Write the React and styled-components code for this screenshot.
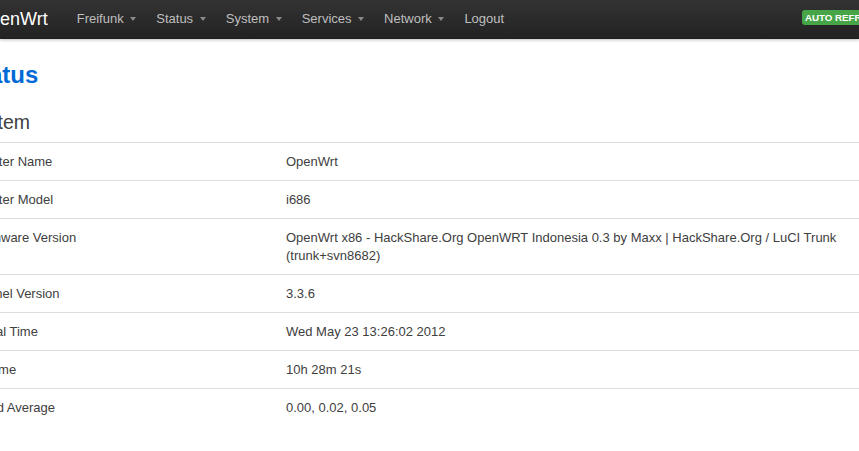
import React from "react";
import styled, { createGlobalStyle } from "styled-components";

const Global = createGlobalStyle`
  html, body { margin: 0; padding: 0; overflow: hidden; background: #fff; }
  body {
    font-family: "Liberation Sans", Arial, Helvetica, sans-serif;
    font-size: 13px;
    line-height: 18px;
    color: #404040;
  }
`;

const Topbar = styled.header`
  height: 39px;
  background: linear-gradient(to bottom, #333333, #222222);
  box-shadow: 0 1px 3px rgba(0, 0, 0, 0.25), inset 0 -1px 0 rgba(0, 0, 0, 0.1);
  position: relative;
  z-index: 2;
`;

const Container = styled.div`
  width: 940px;
  margin-left: -35px;
`;

const TopInner = styled(Container)`
  display: flex;
  align-items: center;
  height: 39px;
`;

const Brand = styled.a`
  font-size: 18px;
  line-height: 1;
  color: #ffffff;
  margin-left: 11px;
  padding: 0 19px 2px 0;
  text-decoration: none;
`;

const Nav = styled.ul`
  display: flex;
  list-style: none;
  margin: 0;
  padding: 0;
`;

const NavLink = styled.a`
  display: flex;
  align-items: center;
  padding: 0 10px 2px 10px;
  color: #bfbfbf;
  font-size: 13px;
  line-height: 19px;
  text-decoration: none;
`;

const Caret = styled.span`
  display: inline-block;
  width: 0;
  height: 0;
  margin-left: 6.6px;
  margin-top: 1px;
  border-top: 4px solid #ffffff;
  border-left: 3.5px solid transparent;
  border-right: 3.5px solid transparent;
  opacity: 0.45;
`;

const Spacer = styled.div`
  flex: 1;
`;

const Label = styled.span`
  display: inline-block;
  padding: 2px 3px 2px;
  margin-right: 3px;
  margin-top: -5px;
  font-size: 9.75px;
  line-height: 11px;
  font-weight: bold;
  color: #ffffff;
  text-transform: uppercase;
  white-space: nowrap;
  background: #46a546;
  border-radius: 3px;
`;

const Main = styled(Container)`
  padding-top: 18px;
`;

const Title = styled.h2`
  margin: 0;
  font-size: 24px;
  line-height: 36px;
  font-weight: bold;
  color: #0069d6;
`;

const Legend = styled.h3`
  margin: 20px 0 9px;
  font-size: 19.5px;
  line-height: 19.5px;
  font-weight: normal;
  color: #404040;
`;

const Table = styled.table`
  width: 100%;
  border-collapse: collapse;
  border-spacing: 0;
`;

const Cell = styled.td`
  padding: 10px 10px 9px;
  line-height: 18px;
  text-align: left;
  vertical-align: top;
  border-top: 1px solid #dddddd;
  width: ${(p) => (p.$title ? "291px" : "auto")};
`;

const rows = [
  ["Router Name", "OpenWrt"],
  ["Router Model", "i686"],
  [
    "Firmware Version",
    "OpenWrt x86 - HackShare.Org OpenWRT Indonesia 0.3 by Maxx | HackShare.Org / LuCI Trunk (trunk+svn8682)",
  ],
  ["Kernel Version", "3.3.6"],
  ["Local Time", "Wed May 23 13:26:02 2012"],
  ["Uptime", "10h 28m 21s"],
  ["Load Average", "0.00, 0.02, 0.05"],
];

const menus = ["Freifunk", "Status", "System", "Services", "Network"];

export default function App() {
  return (
    <>
      <Global />
      <Topbar>
        <TopInner>
          <Brand href="#">OpenWrt</Brand>
          <Nav>
            {menus.map((m) => (
              <li key={m}>
                <NavLink href="#">
                  {m}
                  <Caret />
                </NavLink>
              </li>
            ))}
            <li>
              <NavLink href="#">Logout</NavLink>
            </li>
          </Nav>
          <Spacer />
          <Label>Auto Refresh on</Label>
        </TopInner>
      </Topbar>
      <Main>
        <Title>Status</Title>
        <Legend>System</Legend>
        <Table>
          <tbody>
            {rows.map(([k, v]) => (
              <tr key={k}>
                <Cell $title>{k}</Cell>
                <Cell>{v}</Cell>
              </tr>
            ))}
          </tbody>
        </Table>
      </Main>
    </>
  );
}
